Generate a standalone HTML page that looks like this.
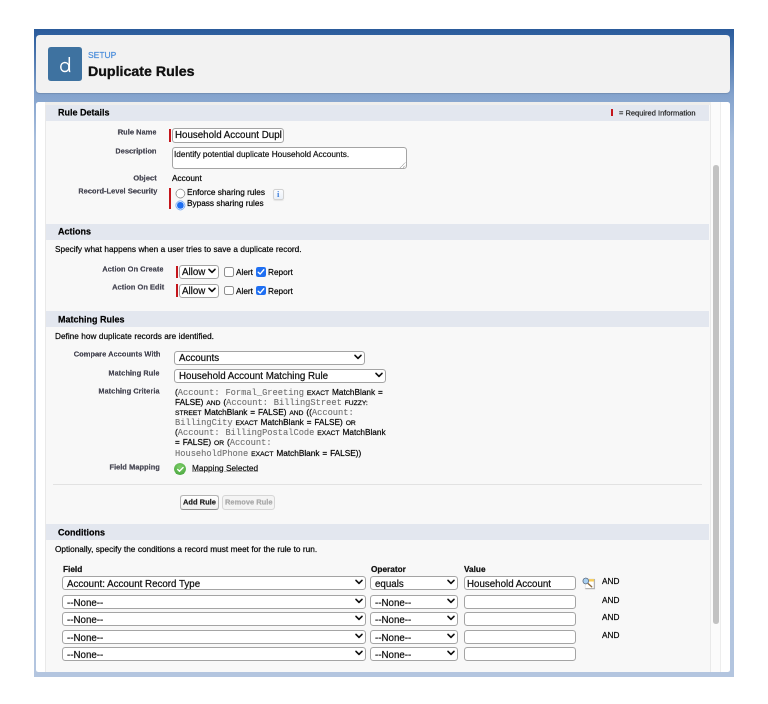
<!DOCTYPE html>
<html><head><meta charset="utf-8"><style>
html,body{margin:0;padding:0;background:#fff;width:768px;height:704px;overflow:hidden;position:relative;}
.r{position:absolute;}
.t{position:absolute;white-space:nowrap;line-height:1;transform:scale(0.5);transform-origin:0 0;will-change:transform;}
.mono{font-family:"Liberation Mono",monospace;color:#707070;font-size:17.44px;-webkit-text-stroke:0.2px #707070;}
.sc{font-size:13.4px;text-transform:uppercase;}
</style></head><body>
<div class="r" style="left:34px;top:29px;width:700.00px;height:648.00px;background:linear-gradient(#2b5b9b 0px,#2f609f 6px,#84a3cd 66px,#a8bedc 110px,#b2c4de 160px,#b3c5df 100%);"></div>
<div class="r" style="left:36px;top:35px;width:694.30px;height:58.00px;background:#f2f2f2;border-radius:4px;box-shadow:0 1px 1px rgba(0,0,0,0.12);"></div>
<div class="r" style="left:48px;top:47px;width:34.00px;height:34.00px;background:#3e72a0;border-radius:3px;"></div>
<svg class="r" style="left:48.3px;top:47px" width="34" height="34" viewBox="0 0 34 34"><ellipse cx="16.9" cy="20" rx="4.1" ry="4.5" fill="none" stroke="#fff" stroke-width="1.5"/><path d="M21.3 10 V23.4 Q21.3 24.5 22.3 24.6" fill="none" stroke="#fff" stroke-width="1.5"/></svg>
<div class="t" style="left:88.00px;top:51px;font-size:17.000px;font-weight:400;color:#4a8ddb;font-family:'Liberation Sans';-webkit-text-stroke:0.400px currentColor;">SETUP</div>
<div class="t" style="left:88.20px;top:64px;font-size:28.400px;font-weight:700;color:#111;font-family:'Liberation Sans';-webkit-text-stroke:0.700px currentColor;">Duplicate Rules</div>
<div class="r" style="left:36px;top:102px;width:694.30px;height:570.00px;background:#fff;border-radius:2.5px;"></div>
<div class="r" style="left:45px;top:102px;width:666.00px;height:570.00px;background:#f8f8f8;border-left:1px solid #e9e9e9;border-right:1px solid #e9e9e9;box-sizing:border-box;"></div>
<div class="r" style="left:45px;top:102px;width:666.00px;height:3.00px;background:#efeeec;"></div>
<div class="r" style="left:711px;top:102px;width:10.00px;height:570.00px;background:#fbfbfb;border-right:1px solid #ededed;box-sizing:border-box;"></div>
<div class="r" style="left:713px;top:165px;width:6.00px;height:459.00px;background:#c2c2c2;border-radius:3px;"></div>
<div class="r" style="left:46px;top:105px;width:663.30px;height:15.90px;background:#e3e7ef;"></div>
<div class="t" style="left:58.00px;top:108px;font-size:18.000px;font-weight:700;color:#000;font-family:'Liberation Sans';-webkit-text-stroke:0.440px currentColor;">Rule Details</div>
<div class="r" style="left:611px;top:109px;width:2.00px;height:7.00px;background:#c4161c;"></div>
<div class="t" style="left:619.00px;top:109px;font-size:15.000px;font-weight:400;color:#222;font-family:'Liberation Sans';-webkit-text-stroke:0.400px currentColor;">= Required Information</div>
<div class="t" style="right:611.00px;top:128px;font-size:15.000px;font-weight:700;color:#4a4a56;font-family:'Liberation Sans';transform-origin:100% 0;-webkit-text-stroke:0.440px currentColor;">Rule Name</div>
<div class="r" style="left:169px;top:129px;width:2.00px;height:13.00px;background:#c4161c;"></div>
<div class="r" style="left:172px;top:128px;width:112.00px;height:15.00px;background:#fff;border:1px solid #a4a4a4;border-radius:3px;box-sizing:border-box;"></div>
<div class="t" style="left:175.00px;top:130px;font-size:19.500px;font-weight:400;color:#111;font-family:'Liberation Sans';-webkit-text-stroke:0.440px currentColor;">Household Account Dupl</div>
<div class="t" style="right:611.00px;top:147px;font-size:15.000px;font-weight:700;color:#4a4a56;font-family:'Liberation Sans';transform-origin:100% 0;-webkit-text-stroke:0.440px currentColor;">Description</div>
<div class="r" style="left:172px;top:147px;width:235.00px;height:22.00px;background:#fff;border:1px solid #a4a4a4;border-radius:3px;box-sizing:border-box;"></div>
<svg class="r" style="left:398px;top:160px" width="9" height="9" viewBox="0 0 9 9"><path d="M2.3 7.6 L7.2 2.7 M5.2 7.6 L7.3 5.5" stroke="#8a8a8a" stroke-width="1" stroke-dasharray="1 0.5"/></svg>
<div class="t" style="left:174.40px;top:150px;font-size:16.500px;font-weight:400;color:#111;font-family:'Liberation Sans';-webkit-text-stroke:0.400px currentColor;">Identify potential duplicate Household Accounts.</div>
<div class="t" style="right:611.00px;top:174px;font-size:15.000px;font-weight:700;color:#4a4a56;font-family:'Liberation Sans';transform-origin:100% 0;-webkit-text-stroke:0.440px currentColor;">Object</div>
<div class="t" style="left:172.00px;top:174px;font-size:16.500px;font-weight:400;color:#000;font-family:'Liberation Sans';-webkit-text-stroke:0.400px currentColor;">Account</div>
<div class="t" style="right:611.00px;top:187px;font-size:15.000px;font-weight:700;color:#4a4a56;font-family:'Liberation Sans';transform-origin:100% 0;-webkit-text-stroke:0.440px currentColor;">Record-Level Security</div>
<div class="r" style="left:169px;top:188px;width:2.00px;height:21.00px;background:#c4161c;"></div>
<svg class="r" style="left:175px;top:188px" width="11" height="24" viewBox="0 0 11 24"><circle cx="5.4" cy="5.6" r="4.4" fill="#fff" stroke="#8a8a8a" stroke-width="0.9"/><circle cx="5.4" cy="17.4" r="4.5" fill="#fff" stroke="#6aa2f2" stroke-width="0.9"/><circle cx="5.4" cy="17.4" r="3.3" fill="#1f6ff2"/></svg>
<div class="t" style="left:187.40px;top:188px;font-size:16.500px;font-weight:400;color:#000;font-family:'Liberation Sans';-webkit-text-stroke:0.400px currentColor;">Enforce sharing rules</div>
<div class="t" style="left:187.40px;top:199px;font-size:16.500px;font-weight:400;color:#000;font-family:'Liberation Sans';-webkit-text-stroke:0.400px currentColor;">Bypass sharing rules</div>
<div class="r" style="left:273.3px;top:189.3px;width:10.70px;height:10.30px;background:linear-gradient(#fbfcfe,#eaf0f8);border:1px solid #d2d2d2;border-radius:2px;box-sizing:border-box;box-shadow:0 0.5px 1px rgba(0,0,0,0.08);"></div>
<div class="t" style="left:277.00px;top:190px;font-size:17.200px;font-weight:700;color:#3f80dc;font-family:'Liberation Serif';-webkit-text-stroke:0;">i</div>
<div class="r" style="left:46px;top:224px;width:663.30px;height:15.90px;background:#e3e7ef;"></div>
<div class="t" style="left:58.00px;top:227px;font-size:18.000px;font-weight:700;color:#000;font-family:'Liberation Sans';-webkit-text-stroke:0.440px currentColor;">Actions</div>
<div class="t" style="left:55.00px;top:245px;font-size:16.500px;font-weight:400;color:#000;font-family:'Liberation Sans';word-spacing:0.300px;-webkit-text-stroke:0.400px currentColor;">Specify what happens when a user tries to save a duplicate record.</div>
<div class="t" style="right:604.00px;top:265px;font-size:15.000px;font-weight:700;color:#4a4a56;font-family:'Liberation Sans';transform-origin:100% 0;-webkit-text-stroke:0.440px currentColor;">Action On Create</div>
<div class="r" style="left:176px;top:265.8px;width:2.00px;height:12.40px;background:#c4161c;"></div>
<div class="r" style="left:179px;top:265px;width:40.00px;height:14.00px;background:#fff;border:1px solid #a4a4a4;border-radius:3px;box-sizing:border-box;"></div>
<div class="t" style="left:181.80px;top:267px;font-size:19.500px;font-weight:400;color:#111;font-family:'Liberation Sans';-webkit-text-stroke:0.440px currentColor;">Allow</div>
<svg class="r" style="left:208.20px;top:268.30px" width="8" height="6" viewBox="0 0 8 6"><path d="M1 1.4 L4 4.4 L7 1.4" fill="none" stroke="#111" stroke-width="1.5" stroke-linecap="round" stroke-linejoin="round"/></svg>
<div class="r" style="left:224.2px;top:267.2px;width:9.50px;height:9.50px;background:#fff;border:1px solid #8f8f8f;border-radius:2px;box-sizing:border-box;"></div>
<div class="t" style="left:236.00px;top:268px;font-size:16.500px;font-weight:400;color:#000;font-family:'Liberation Sans';-webkit-text-stroke:0.400px currentColor;">Alert</div>
<div class="r" style="left:256.3px;top:267.2px;width:9.50px;height:9.50px;background:#1f6ff2;border-radius:2px;"></div>
<svg class="r" style="left:256.3px;top:267.2px" width="10" height="10" viewBox="0 0 10 10"><path d="M2.2 5.2 L4.1 7.1 L7.8 2.8" fill="none" stroke="#fff" stroke-width="1.4" stroke-linecap="round" stroke-linejoin="round"/></svg>
<div class="t" style="left:268.20px;top:268px;font-size:16.500px;font-weight:400;color:#000;font-family:'Liberation Sans';-webkit-text-stroke:0.400px currentColor;">Report</div>
<div class="t" style="right:604.00px;top:283px;font-size:15.000px;font-weight:700;color:#4a4a56;font-family:'Liberation Sans';transform-origin:100% 0;-webkit-text-stroke:0.440px currentColor;">Action On Edit</div>
<div class="r" style="left:176px;top:284.3px;width:2.00px;height:12.40px;background:#c4161c;"></div>
<div class="r" style="left:179px;top:283.5px;width:40.00px;height:14.00px;background:#fff;border:1px solid #a4a4a4;border-radius:3px;box-sizing:border-box;"></div>
<div class="t" style="left:181.80px;top:286px;font-size:19.500px;font-weight:400;color:#111;font-family:'Liberation Sans';-webkit-text-stroke:0.440px currentColor;">Allow</div>
<svg class="r" style="left:208.20px;top:286.80px" width="8" height="6" viewBox="0 0 8 6"><path d="M1 1.4 L4 4.4 L7 1.4" fill="none" stroke="#111" stroke-width="1.5" stroke-linecap="round" stroke-linejoin="round"/></svg>
<div class="r" style="left:224.2px;top:285.7px;width:9.50px;height:9.50px;background:#fff;border:1px solid #8f8f8f;border-radius:2px;box-sizing:border-box;"></div>
<div class="t" style="left:236.00px;top:287px;font-size:16.500px;font-weight:400;color:#000;font-family:'Liberation Sans';-webkit-text-stroke:0.400px currentColor;">Alert</div>
<div class="r" style="left:256.3px;top:285.7px;width:9.50px;height:9.50px;background:#1f6ff2;border-radius:2px;"></div>
<svg class="r" style="left:256.3px;top:285.7px" width="10" height="10" viewBox="0 0 10 10"><path d="M2.2 5.2 L4.1 7.1 L7.8 2.8" fill="none" stroke="#fff" stroke-width="1.4" stroke-linecap="round" stroke-linejoin="round"/></svg>
<div class="t" style="left:268.20px;top:287px;font-size:16.500px;font-weight:400;color:#000;font-family:'Liberation Sans';-webkit-text-stroke:0.400px currentColor;">Report</div>
<div class="r" style="left:46px;top:311px;width:663.30px;height:15.90px;background:#e3e7ef;"></div>
<div class="t" style="left:58.00px;top:315px;font-size:18.000px;font-weight:700;color:#000;font-family:'Liberation Sans';-webkit-text-stroke:0.440px currentColor;">Matching Rules</div>
<div class="t" style="left:55.00px;top:332px;font-size:16.500px;font-weight:400;color:#000;font-family:'Liberation Sans';word-spacing:0.300px;-webkit-text-stroke:0.400px currentColor;">Define how duplicate records are identified.</div>
<div class="t" style="right:608.00px;top:350px;font-size:15.000px;font-weight:700;color:#4a4a56;font-family:'Liberation Sans';transform-origin:100% 0;-webkit-text-stroke:0.440px currentColor;">Compare Accounts With</div>
<div class="r" style="left:174px;top:351px;width:191.00px;height:13.50px;background:#fff;border:1px solid #a4a4a4;border-radius:3px;box-sizing:border-box;"></div>
<div class="t" style="left:178.60px;top:353px;font-size:19.500px;font-weight:400;color:#111;font-family:'Liberation Sans';-webkit-text-stroke:0.440px currentColor;">Accounts</div>
<svg class="r" style="left:354.20px;top:354.30px" width="8" height="6" viewBox="0 0 8 6"><path d="M1 1.4 L4 4.4 L7 1.4" fill="none" stroke="#111" stroke-width="1.5" stroke-linecap="round" stroke-linejoin="round"/></svg>
<div class="t" style="right:608.00px;top:369px;font-size:15.000px;font-weight:700;color:#4a4a56;font-family:'Liberation Sans';transform-origin:100% 0;-webkit-text-stroke:0.440px currentColor;">Matching Rule</div>
<div class="r" style="left:174px;top:369px;width:212.00px;height:14.00px;background:#fff;border:1px solid #a4a4a4;border-radius:3px;box-sizing:border-box;"></div>
<div class="t" style="left:178.60px;top:371px;font-size:19.500px;font-weight:400;color:#111;font-family:'Liberation Sans';-webkit-text-stroke:0.440px currentColor;">Household Account Matching Rule</div>
<svg class="r" style="left:375.20px;top:372.30px" width="8" height="6" viewBox="0 0 8 6"><path d="M1 1.4 L4 4.4 L7 1.4" fill="none" stroke="#111" stroke-width="1.5" stroke-linecap="round" stroke-linejoin="round"/></svg>
<div class="t" style="right:608.00px;top:387px;font-size:15.000px;font-weight:700;color:#4a4a56;font-family:'Liberation Sans';transform-origin:100% 0;-webkit-text-stroke:0.440px currentColor;">Matching Criteria</div>
<div class="t" style="left:174.50px;top:388px;font-size:16.500px;font-weight:400;color:#000;font-family:'Liberation Sans';word-spacing:1.200px;-webkit-text-stroke:0.400px currentColor;">(<span class="mono">Account: Formal_Greeting</span> <span class="sc">EXACT</span> MatchBlank =</div>
<div class="t" style="left:174.50px;top:398px;font-size:16.500px;font-weight:400;color:#000;font-family:'Liberation Sans';word-spacing:1.200px;-webkit-text-stroke:0.400px currentColor;">FALSE) <span class="sc">AND</span> (<span class="mono">Account: BillingStreet</span> <span class="sc">FUZZY:</span></div>
<div class="t" style="left:174.50px;top:408px;font-size:16.500px;font-weight:400;color:#000;font-family:'Liberation Sans';word-spacing:1.200px;-webkit-text-stroke:0.400px currentColor;"><span class="sc">STREET</span> MatchBlank = FALSE) <span class="sc">AND</span> ((<span class="mono">Account:</span></div>
<div class="t" style="left:174.50px;top:418px;font-size:16.500px;font-weight:400;color:#000;font-family:'Liberation Sans';word-spacing:1.200px;-webkit-text-stroke:0.400px currentColor;"><span class="mono">BillingCity</span> <span class="sc">EXACT</span> MatchBlank = FALSE) <span class="sc">OR</span></div>
<div class="t" style="left:174.50px;top:428px;font-size:16.500px;font-weight:400;color:#000;font-family:'Liberation Sans';word-spacing:1.200px;-webkit-text-stroke:0.400px currentColor;">(<span class="mono">Account: BillingPostalCode</span> <span class="sc">EXACT</span> MatchBlank</div>
<div class="t" style="left:174.50px;top:438px;font-size:16.500px;font-weight:400;color:#000;font-family:'Liberation Sans';word-spacing:1.200px;-webkit-text-stroke:0.400px currentColor;">= FALSE) <span class="sc">OR</span> (<span class="mono">Account:</span></div>
<div class="t" style="left:174.50px;top:449px;font-size:16.500px;font-weight:400;color:#000;font-family:'Liberation Sans';word-spacing:1.200px;-webkit-text-stroke:0.400px currentColor;"><span class="mono">HouseholdPhone</span> <span class="sc">EXACT</span> MatchBlank = FALSE))</div>
<div class="t" style="right:608.00px;top:463px;font-size:15.000px;font-weight:700;color:#4a4a56;font-family:'Liberation Sans';transform-origin:100% 0;-webkit-text-stroke:0.440px currentColor;">Field Mapping</div>
<div class="r" style="left:174px;top:463px;width:12.4px;height:12.4px;border-radius:50%;background:radial-gradient(circle at 50% 35%,#7fcf6a,#3f9e36);"></div>
<svg class="r" style="left:174px;top:463px" width="13" height="13" viewBox="0 0 13 13"><path d="M3.7 6.5 L5.5 8.2 L9.1 4.5" fill="none" stroke="#fff" stroke-width="1.35" stroke-linecap="round" stroke-linejoin="round"/></svg>
<div class="t" style="left:192.30px;top:464px;font-size:16.500px;font-weight:400;color:#111;font-family:'Liberation Sans';text-decoration:underline;text-decoration-color:#777;-webkit-text-stroke:0.400px currentColor;">Mapping Selected</div>
<div class="r" style="left:53px;top:484px;width:649.00px;height:1.00px;background:#e2e2e2;"></div>
<div class="r" style="left:180px;top:495px;width:39.00px;height:15.00px;background:linear-gradient(#fff,#f0f0f0);border:1px solid #b5b5b5;border-bottom-color:#8f8f8f;border-radius:3px;box-sizing:border-box;"></div>
<div class="t" style="left:183.20px;top:498px;font-size:15.000px;font-weight:700;color:#222;font-family:'Liberation Sans';-webkit-text-stroke:0.440px currentColor;">Add Rule</div>
<div class="r" style="left:222px;top:495px;width:53.00px;height:15.00px;background:#f4f4f4;border:1px solid #d6d6d6;border-radius:3px;box-sizing:border-box;"></div>
<div class="t" style="left:224.60px;top:498px;font-size:15.000px;font-weight:700;color:#a8a8a8;font-family:'Liberation Sans';-webkit-text-stroke:0.440px currentColor;">Remove Rule</div>
<div class="r" style="left:46px;top:524px;width:663.30px;height:15.90px;background:#e3e7ef;"></div>
<div class="t" style="left:58.00px;top:528px;font-size:18.000px;font-weight:700;color:#000;font-family:'Liberation Sans';-webkit-text-stroke:0.440px currentColor;">Conditions</div>
<div class="t" style="left:55.00px;top:545px;font-size:16.500px;font-weight:400;color:#000;font-family:'Liberation Sans';word-spacing:0.300px;-webkit-text-stroke:0.400px currentColor;">Optionally, specify the conditions a record must meet for the rule to run.</div>
<div class="t" style="left:62.80px;top:565px;font-size:16.500px;font-weight:700;color:#111;font-family:'Liberation Sans';-webkit-text-stroke:0.440px currentColor;">Field</div>
<div class="t" style="left:371.00px;top:565px;font-size:16.500px;font-weight:700;color:#111;font-family:'Liberation Sans';-webkit-text-stroke:0.440px currentColor;">Operator</div>
<div class="t" style="left:464.30px;top:565px;font-size:16.500px;font-weight:700;color:#111;font-family:'Liberation Sans';-webkit-text-stroke:0.440px currentColor;">Value</div>
<div class="r" style="left:62px;top:576px;width:303.50px;height:14.00px;background:#fff;border:1px solid #a4a4a4;border-radius:3px;box-sizing:border-box;"></div>
<div class="t" style="left:66.60px;top:579px;font-size:19.500px;font-weight:400;color:#111;font-family:'Liberation Sans';-webkit-text-stroke:0.440px currentColor;">Account: Account Record Type</div>
<svg class="r" style="left:354.70px;top:579.30px" width="8" height="6" viewBox="0 0 8 6"><path d="M1 1.4 L4 4.4 L7 1.4" fill="none" stroke="#111" stroke-width="1.5" stroke-linecap="round" stroke-linejoin="round"/></svg>
<div class="r" style="left:370px;top:576px;width:88.00px;height:14.00px;background:#fff;border:1px solid #a4a4a4;border-radius:3px;box-sizing:border-box;"></div>
<div class="t" style="left:374.60px;top:579px;font-size:19.500px;font-weight:400;color:#111;font-family:'Liberation Sans';-webkit-text-stroke:0.440px currentColor;">equals</div>
<svg class="r" style="left:447.20px;top:579.30px" width="8" height="6" viewBox="0 0 8 6"><path d="M1 1.4 L4 4.4 L7 1.4" fill="none" stroke="#111" stroke-width="1.5" stroke-linecap="round" stroke-linejoin="round"/></svg>
<div class="r" style="left:464.3px;top:576px;width:111.90px;height:14.00px;background:#fff;border:1px solid #a4a4a4;border-radius:3px;box-sizing:border-box;"></div>
<div class="t" style="left:467.30px;top:579px;font-size:19.500px;font-weight:400;color:#111;font-family:'Liberation Sans';-webkit-text-stroke:0.440px currentColor;">Household Account</div>
<div class="t" style="left:601.90px;top:577px;font-size:16.500px;font-weight:400;color:#000;font-family:'Liberation Sans';-webkit-text-stroke:0.400px currentColor;">AND</div>
<div class="r" style="left:62px;top:595px;width:303.50px;height:14.00px;background:#fff;border:1px solid #a4a4a4;border-radius:3px;box-sizing:border-box;"></div>
<div class="t" style="left:66.60px;top:598px;font-size:19.500px;font-weight:400;color:#111;font-family:'Liberation Sans';-webkit-text-stroke:0.440px currentColor;">--None--</div>
<svg class="r" style="left:354.70px;top:598.30px" width="8" height="6" viewBox="0 0 8 6"><path d="M1 1.4 L4 4.4 L7 1.4" fill="none" stroke="#111" stroke-width="1.5" stroke-linecap="round" stroke-linejoin="round"/></svg>
<div class="r" style="left:370px;top:595px;width:88.00px;height:14.00px;background:#fff;border:1px solid #a4a4a4;border-radius:3px;box-sizing:border-box;"></div>
<div class="t" style="left:374.60px;top:598px;font-size:19.500px;font-weight:400;color:#111;font-family:'Liberation Sans';-webkit-text-stroke:0.440px currentColor;">--None--</div>
<svg class="r" style="left:447.20px;top:598.30px" width="8" height="6" viewBox="0 0 8 6"><path d="M1 1.4 L4 4.4 L7 1.4" fill="none" stroke="#111" stroke-width="1.5" stroke-linecap="round" stroke-linejoin="round"/></svg>
<div class="r" style="left:464.3px;top:595px;width:111.90px;height:14.00px;background:#fff;border:1px solid #a4a4a4;border-radius:3px;box-sizing:border-box;"></div>
<div class="t" style="left:601.90px;top:596px;font-size:16.500px;font-weight:400;color:#000;font-family:'Liberation Sans';-webkit-text-stroke:0.400px currentColor;">AND</div>
<div class="r" style="left:62px;top:612px;width:303.50px;height:14.00px;background:#fff;border:1px solid #a4a4a4;border-radius:3px;box-sizing:border-box;"></div>
<div class="t" style="left:66.60px;top:615px;font-size:19.500px;font-weight:400;color:#111;font-family:'Liberation Sans';-webkit-text-stroke:0.440px currentColor;">--None--</div>
<svg class="r" style="left:354.70px;top:615.30px" width="8" height="6" viewBox="0 0 8 6"><path d="M1 1.4 L4 4.4 L7 1.4" fill="none" stroke="#111" stroke-width="1.5" stroke-linecap="round" stroke-linejoin="round"/></svg>
<div class="r" style="left:370px;top:612px;width:88.00px;height:14.00px;background:#fff;border:1px solid #a4a4a4;border-radius:3px;box-sizing:border-box;"></div>
<div class="t" style="left:374.60px;top:615px;font-size:19.500px;font-weight:400;color:#111;font-family:'Liberation Sans';-webkit-text-stroke:0.440px currentColor;">--None--</div>
<svg class="r" style="left:447.20px;top:615.30px" width="8" height="6" viewBox="0 0 8 6"><path d="M1 1.4 L4 4.4 L7 1.4" fill="none" stroke="#111" stroke-width="1.5" stroke-linecap="round" stroke-linejoin="round"/></svg>
<div class="r" style="left:464.3px;top:612px;width:111.90px;height:14.00px;background:#fff;border:1px solid #a4a4a4;border-radius:3px;box-sizing:border-box;"></div>
<div class="t" style="left:601.90px;top:613px;font-size:16.500px;font-weight:400;color:#000;font-family:'Liberation Sans';-webkit-text-stroke:0.400px currentColor;">AND</div>
<div class="r" style="left:62px;top:630px;width:303.50px;height:14.00px;background:#fff;border:1px solid #a4a4a4;border-radius:3px;box-sizing:border-box;"></div>
<div class="t" style="left:66.60px;top:633px;font-size:19.500px;font-weight:400;color:#111;font-family:'Liberation Sans';-webkit-text-stroke:0.440px currentColor;">--None--</div>
<svg class="r" style="left:354.70px;top:633.30px" width="8" height="6" viewBox="0 0 8 6"><path d="M1 1.4 L4 4.4 L7 1.4" fill="none" stroke="#111" stroke-width="1.5" stroke-linecap="round" stroke-linejoin="round"/></svg>
<div class="r" style="left:370px;top:630px;width:88.00px;height:14.00px;background:#fff;border:1px solid #a4a4a4;border-radius:3px;box-sizing:border-box;"></div>
<div class="t" style="left:374.60px;top:633px;font-size:19.500px;font-weight:400;color:#111;font-family:'Liberation Sans';-webkit-text-stroke:0.440px currentColor;">--None--</div>
<svg class="r" style="left:447.20px;top:633.30px" width="8" height="6" viewBox="0 0 8 6"><path d="M1 1.4 L4 4.4 L7 1.4" fill="none" stroke="#111" stroke-width="1.5" stroke-linecap="round" stroke-linejoin="round"/></svg>
<div class="r" style="left:464.3px;top:630px;width:111.90px;height:14.00px;background:#fff;border:1px solid #a4a4a4;border-radius:3px;box-sizing:border-box;"></div>
<div class="t" style="left:601.90px;top:631px;font-size:16.500px;font-weight:400;color:#000;font-family:'Liberation Sans';-webkit-text-stroke:0.400px currentColor;">AND</div>
<div class="r" style="left:62px;top:647px;width:303.50px;height:14.00px;background:#fff;border:1px solid #a4a4a4;border-radius:3px;box-sizing:border-box;"></div>
<div class="t" style="left:66.60px;top:650px;font-size:19.500px;font-weight:400;color:#111;font-family:'Liberation Sans';-webkit-text-stroke:0.440px currentColor;">--None--</div>
<svg class="r" style="left:354.70px;top:650.30px" width="8" height="6" viewBox="0 0 8 6"><path d="M1 1.4 L4 4.4 L7 1.4" fill="none" stroke="#111" stroke-width="1.5" stroke-linecap="round" stroke-linejoin="round"/></svg>
<div class="r" style="left:370px;top:647px;width:88.00px;height:14.00px;background:#fff;border:1px solid #a4a4a4;border-radius:3px;box-sizing:border-box;"></div>
<div class="t" style="left:374.60px;top:650px;font-size:19.500px;font-weight:400;color:#111;font-family:'Liberation Sans';-webkit-text-stroke:0.440px currentColor;">--None--</div>
<svg class="r" style="left:447.20px;top:650.30px" width="8" height="6" viewBox="0 0 8 6"><path d="M1 1.4 L4 4.4 L7 1.4" fill="none" stroke="#111" stroke-width="1.5" stroke-linecap="round" stroke-linejoin="round"/></svg>
<div class="r" style="left:464.3px;top:647px;width:111.90px;height:14.00px;background:#fff;border:1px solid #a4a4a4;border-radius:3px;box-sizing:border-box;"></div>
<svg class="r" style="left:579px;top:574px" width="20" height="18" viewBox="0 0 20 18"><rect x="6.3" y="5" width="9" height="9.6" fill="#fff"/><path d="M6.3 14.6 V5 H15.3" fill="none" stroke="#e2e2e2" stroke-width="0.8"/><path d="M15.4 5 V14.7 H6.3" fill="none" stroke="#b3b3b3" stroke-width="1.3"/><rect x="9.6" y="5.1" width="5.4" height="2.4" fill="#f7cc58"/><circle cx="6.8" cy="7" r="2.9" fill="#a9d0f2" stroke="#66768a" stroke-width="0.9"/><path d="M9.3 9.7 L12.7 12.7" stroke="#8d6b3c" stroke-width="1.4" stroke-linecap="round"/></svg>
</body></html>
